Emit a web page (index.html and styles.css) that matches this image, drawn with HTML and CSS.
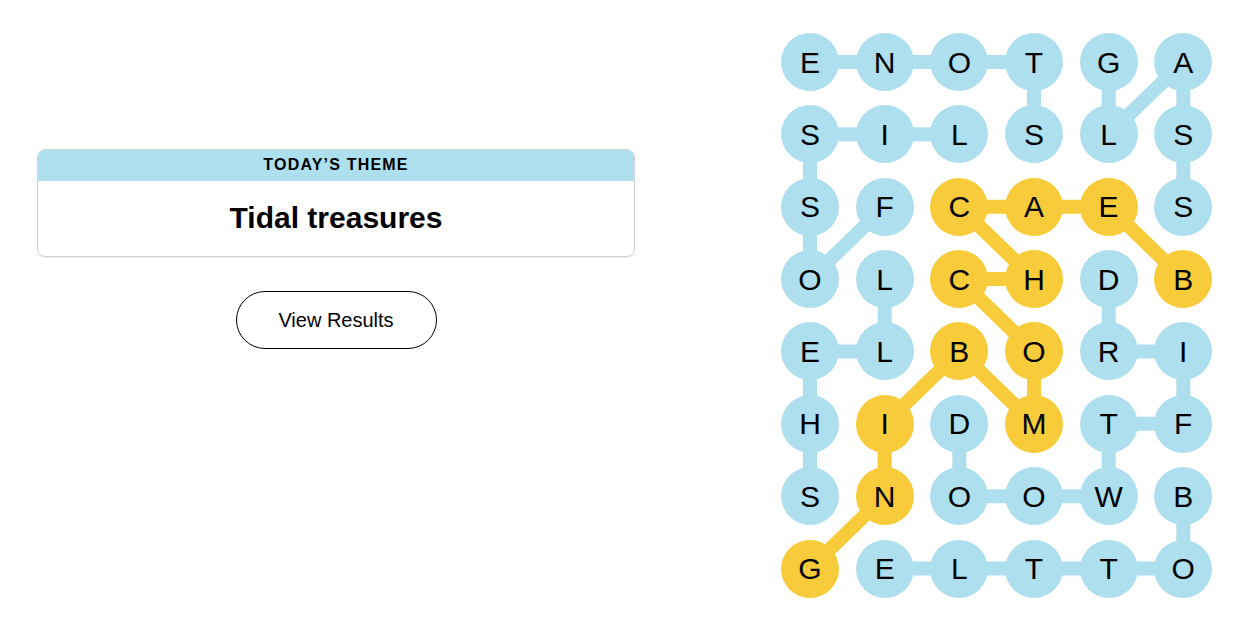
FILE: index.html
```html
<!DOCTYPE html>
<html lang="en">
<head>
<meta charset="utf-8">
<title>Strands</title>
<link rel="stylesheet" href="styles.css">
</head>
<body>
<main class="page">
  <section class="left">
    <div class="theme-card">
      <div class="theme-head">TODAY’S THEME</div>
      <div class="theme-body">Tidal treasures</div>
    </div>
    <button class="results-btn">View Results</button>
  </section>
  <section class="board">
    <svg class="links" viewBox="0 0 431.33 564.5" width="431.33" height="564.5" aria-hidden="true">
      <g stroke="#aedfee" stroke-width="14" fill="none">
        <line x1="29" y1="29" x2="253" y2="29"/>
        <line x1="253" y1="29" x2="253" y2="101.36"/>
        <line x1="327.67" y1="29" x2="327.67" y2="101.36"/>
        <line x1="327.67" y1="101.36" x2="402.33" y2="29"/>
        <line x1="402.33" y1="29" x2="402.33" y2="173.71"/>
        <line x1="29" y1="101.36" x2="178.33" y2="101.36"/>
        <line x1="29" y1="101.36" x2="29" y2="246.07"/>
        <line x1="29" y1="246.07" x2="103.67" y2="173.71"/>
        <line x1="103.67" y1="246.07" x2="103.67" y2="318.43"/>
        <line x1="29" y1="318.43" x2="103.67" y2="318.43"/>
        <line x1="29" y1="318.43" x2="29" y2="463.14"/>
        <line x1="327.67" y1="246.07" x2="327.67" y2="318.43"/>
        <line x1="327.67" y1="318.43" x2="402.33" y2="318.43"/>
        <line x1="402.33" y1="318.43" x2="402.33" y2="390.79"/>
        <line x1="327.67" y1="390.79" x2="402.33" y2="390.79"/>
        <line x1="327.67" y1="390.79" x2="327.67" y2="463.14"/>
        <line x1="178.33" y1="463.14" x2="327.67" y2="463.14"/>
        <line x1="178.33" y1="390.79" x2="178.33" y2="463.14"/>
        <line x1="402.33" y1="463.14" x2="402.33" y2="535.5"/>
        <line x1="103.67" y1="535.5" x2="402.33" y2="535.5"/>
      </g>
      <g stroke="#f8cb3a" stroke-width="14" fill="none">
        <line x1="402.33" y1="246.07" x2="327.67" y2="173.71"/>
        <line x1="178.33" y1="173.71" x2="327.67" y2="173.71"/>
        <line x1="178.33" y1="173.71" x2="253" y2="246.07"/>
        <line x1="178.33" y1="246.07" x2="253" y2="246.07"/>
        <line x1="178.33" y1="246.07" x2="253" y2="318.43"/>
        <line x1="253" y1="318.43" x2="253" y2="390.79"/>
        <line x1="253" y1="390.79" x2="178.33" y2="318.43"/>
        <line x1="178.33" y1="318.43" x2="103.67" y2="390.79"/>
        <line x1="103.67" y1="390.79" x2="103.67" y2="463.14"/>
        <line x1="103.67" y1="463.14" x2="29" y2="535.5"/>
      </g>
    </svg>
    <div class="cell">E</div><div class="cell">N</div><div class="cell">O</div><div class="cell">T</div><div class="cell">G</div><div class="cell">A</div>
    <div class="cell">S</div><div class="cell">I</div><div class="cell">L</div><div class="cell">S</div><div class="cell">L</div><div class="cell">S</div>
    <div class="cell">S</div><div class="cell">F</div><div class="cell sp">C</div><div class="cell sp">A</div><div class="cell sp">E</div><div class="cell">S</div>
    <div class="cell">O</div><div class="cell">L</div><div class="cell sp">C</div><div class="cell sp">H</div><div class="cell">D</div><div class="cell sp">B</div>
    <div class="cell">E</div><div class="cell">L</div><div class="cell sp">B</div><div class="cell sp">O</div><div class="cell">R</div><div class="cell">I</div>
    <div class="cell">H</div><div class="cell sp">I</div><div class="cell">D</div><div class="cell sp">M</div><div class="cell">T</div><div class="cell">F</div>
    <div class="cell">S</div><div class="cell sp">N</div><div class="cell">O</div><div class="cell">O</div><div class="cell">W</div><div class="cell">B</div>
    <div class="cell sp">G</div><div class="cell">E</div><div class="cell">L</div><div class="cell">T</div><div class="cell">T</div><div class="cell">O</div>
  </section>
</main>
</body>
</html>
```
FILE: styles.css
```css
* { box-sizing: border-box; }
html, body { margin: 0; padding: 0; background: #fff; }
body {
  font-family: "Liberation Sans", Arial, sans-serif;
  color: #000;
  width: 1250px;
  height: 638px;
  overflow: hidden;
}
.page {
  display: flex;
  align-items: flex-start;
}
.left {
  width: 598px;
  margin-left: 37px;
  padding-top: 149px;
  display: flex;
  flex-direction: column;
  align-items: center;
}
.theme-card {
  width: 100%;
  border: 1px solid #d2d2d2;
  border-radius: 8px;
  overflow: hidden;
  box-shadow: 0 1px 1px rgba(0, 0, 0, 0.08);
}
.theme-head {
  height: 32px;
  background: #aedfee;
  font-size: 16px;
  font-weight: bold;
  letter-spacing: 1.2px;
  line-height: 32px;
  text-align: center;
  margin-top: -1px;
}
.theme-body {
  height: 75px;
  display: flex;
  align-items: center;
  justify-content: center;
  font-size: 30px;
  font-weight: bold;
  padding-bottom: 2px;
}
.results-btn {
  margin-top: 34px;
  width: 201px;
  height: 58px;
  border: 1px solid #000;
  border-radius: 29px;
  background: #fff;
  font-family: "Liberation Sans", Arial, sans-serif;
  font-size: 20px;
  color: #000;
  padding: 0;
}
.board {
  position: relative;
  margin-left: 146px;
  margin-top: 33px;
  display: grid;
  grid-template-columns: repeat(6, 58px);
  grid-auto-rows: 58px;
  column-gap: 16.67px;
  row-gap: 14.36px;
}
.links {
  position: absolute;
  left: 0;
  top: 0;
  z-index: 0;
}
.cell {
  position: relative;
  z-index: 1;
  width: 58px;
  height: 58px;
  border-radius: 50%;
  background: #aedfee;
  display: flex;
  align-items: center;
  justify-content: center;
  font-size: 30px;
  line-height: 1;
  padding-top: 1px;
}
.cell.sp { background: #f8cb3a; }
```
